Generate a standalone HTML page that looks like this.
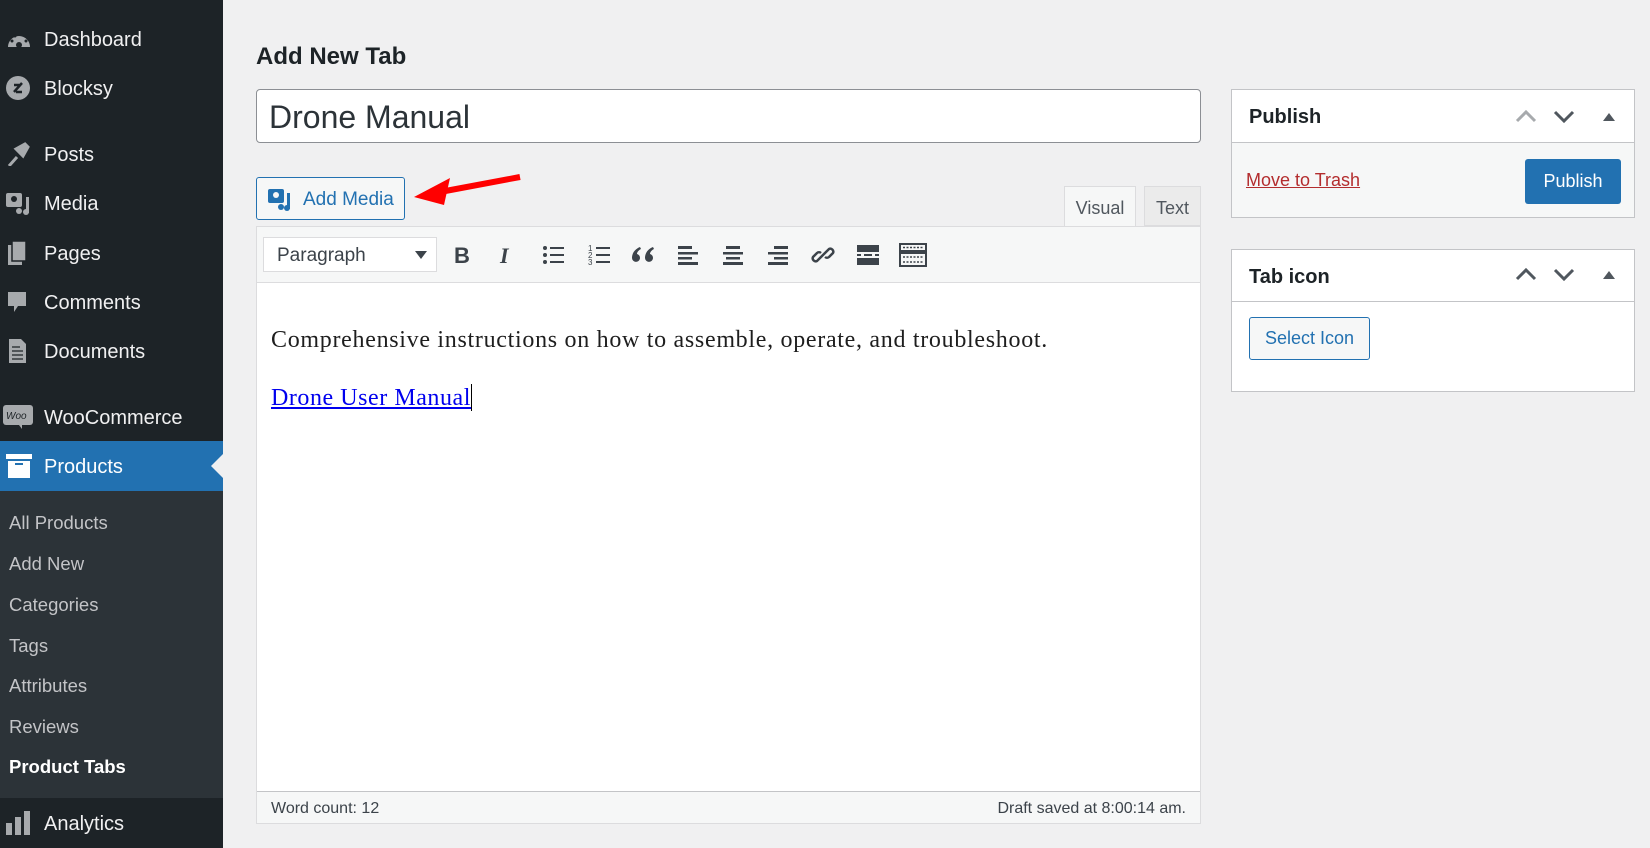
<!DOCTYPE html>
<html><head><meta charset="utf-8"><style>
*{box-sizing:border-box;margin:0;padding:0}
body{width:1650px;height:848px;background:#f0f0f1;font-family:"Liberation Sans",sans-serif;position:relative;overflow:hidden;color:#1d2327}
.abs{position:absolute}
#side{left:0;top:0;width:223px;height:848px;background:#1d2327}
.mi{position:absolute;left:44px;color:#f0f0f1;font-size:20px;line-height:24px;margin-top:1px}
.ic{position:absolute;left:6px;width:26px;height:24px}
.sub{position:absolute;left:9px;color:#c3c4c7;font-size:18.5px;line-height:22px;margin-top:1px}
.box{position:absolute;background:#fff;border:1px solid #c3c4c7}
.tb{position:absolute;top:243px}
</style></head><body>
<div id="side" class="abs">
 <div class="abs" style="left:0;top:491px;width:223px;height:307px;background:#2c3338"></div>
 <div class="abs" style="left:0;top:441px;width:223px;height:50px;background:#2271b1"></div>
 <div class="abs" style="left:211px;top:454px;width:0;height:0;border-top:12px solid transparent;border-bottom:12px solid transparent;border-right:12px solid #f0f0f1"></div>
 <svg class="ic" style="top:27px" viewBox="0 0 26 24"><path d="M2 20a11 11 0 0 1 22 0z" fill="#a7aaad"/><circle cx="13" cy="18" r="3" fill="#1d2327"/><circle cx="6" cy="14" r="1.5" fill="#1d2327"/><circle cx="9" cy="9" r="1.5" fill="#1d2327"/><circle cx="20" cy="14" r="1.5" fill="#1d2327"/></svg>
 <div class="mi" style="top:27px">Dashboard</div>
 <svg class="ic" style="top:76px" viewBox="0 0 26 24"><circle cx="12" cy="12" r="12" fill="#a7aaad"/><path d="M8 16l8-9M8 9h6M10 16h6" stroke="#1d2327" stroke-width="2.5"/></svg>
 <div class="mi" style="top:76px">Blocksy</div>
 <svg class="ic" style="top:142px" viewBox="0 0 26 24"><path d="M3 24l8-9 M10 7l7 7 5-9-3-3z" stroke="#a7aaad" stroke-width="3" fill="#a7aaad"/></svg>
 <div class="mi" style="top:142px">Posts</div>
 <svg class="ic" style="top:191px" viewBox="0 0 26 24"><rect x="0" y="2" width="16" height="14" rx="2" fill="#a7aaad"/><circle cx="8" cy="8" r="3" fill="#1d2327"/><circle cx="13" cy="20" r="3" fill="#a7aaad"/><rect x="20" y="6" width="3" height="16" fill="#a7aaad"/><circle cx="20" cy="21" r="3" fill="#a7aaad"/></svg>
 <div class="mi" style="top:191px">Media</div>
 <svg class="ic" style="top:241px" viewBox="0 0 26 24"><rect x="2" y="4" width="14" height="20" fill="#a7aaad"/><rect x="6" y="0" width="14" height="20" fill="#a7aaad" stroke="#1d2327" stroke-width="1.5"/></svg>
 <div class="mi" style="top:241px">Pages</div>
 <svg class="ic" style="top:290px" viewBox="0 0 26 24"><path d="M2 2h18v14h-8l-4 6v-6H2z" fill="#a7aaad"/></svg>
 <div class="mi" style="top:290px">Comments</div>
 <svg class="ic" style="top:339px" viewBox="0 0 26 24"><path d="M3 0h12l5 5v19H3z" fill="#a7aaad"/><path d="M6 8h8M6 12h11M6 16h11M6 20h11" stroke="#1d2327" stroke-width="1.2"/></svg>
 <div class="mi" style="top:339px">Documents</div>
 <svg class="ic" style="top:405px;left:3px;width:30px" viewBox="0 0 30 24"><rect x="0" y="0" width="30" height="20" rx="3" fill="#a7aaad"/><path d="M16 20l3 4v-4z" fill="#a7aaad"/><text x="3" y="14" font-size="10" font-family="Liberation Sans" fill="#1d2327" font-style="italic">Woo</text></svg>
 <div class="mi" style="top:405px">WooCommerce</div>
 <svg class="ic" style="top:454px" viewBox="0 0 26 24"><rect x="0" y="0" width="26" height="5" fill="#fff"/><rect x="2" y="7" width="22" height="17" fill="#fff"/><rect x="9" y="9" width="8" height="2" fill="#2271b1"/></svg>
 <div class="mi" style="top:454px;color:#fff">Products</div>
 <div class="sub" style="top:511px">All Products</div>
 <div class="sub" style="top:552px">Add New</div>
 <div class="sub" style="top:593px">Categories</div>
 <div class="sub" style="top:634px">Tags</div>
 <div class="sub" style="top:674px">Attributes</div>
 <div class="sub" style="top:715px">Reviews</div>
 <div class="sub" style="top:755px;color:#fff;font-weight:bold">Product Tabs</div>
 <svg class="ic" style="top:811px" viewBox="0 0 26 24"><rect x="0" y="12" width="6" height="12" fill="#a7aaad"/><rect x="9" y="6" width="6" height="18" fill="#a7aaad"/><rect x="18" y="0" width="6" height="24" fill="#a7aaad"/></svg>
 <div class="mi" style="top:811px">Analytics</div>
</div>

<div class="abs" style="left:256px;top:43px;font-size:24px;font-weight:bold;color:#1d2327">Add New Tab</div>
<div class="abs" style="left:256px;top:89px;width:945px;height:54px;background:#fff;border:1px solid #8c8f94;border-radius:4px;font-size:32px;padding:9px 12px 0;color:#2c3338">Drone Manual</div>

<div class="abs" style="left:256px;top:177px;width:149px;height:43px;background:#f6f7f7;border:1px solid #2271b1;border-radius:3px;color:#2271b1;font-size:19px;padding:11px 0 0 46px">Add Media</div>
<svg class="abs" style="left:268px;top:187px" width="26" height="24" viewBox="0 0 26 24"><rect x="0" y="2" width="16" height="14" rx="2" fill="#2271b1"/><circle cx="8" cy="8" r="3" fill="#f6f7f7"/><circle cx="13" cy="20" r="3" fill="#2271b1"/><rect x="19" y="6" width="3" height="16" fill="#2271b1"/><circle cx="19" cy="21" r="3" fill="#2271b1"/></svg>
<svg class="abs" style="left:410px;top:170px" width="115" height="40" viewBox="0 0 115 40"><path d="M110 7L30 22" stroke="#f00" stroke-width="6"/><path d="M4 27L40 8 34 35z" fill="#f00"/></svg>

<div class="abs" style="left:1064px;top:186px;width:72px;height:41px;background:#f6f7f7;border:1px solid #dcdcde;border-bottom:none;font-size:18px;color:#50575e;text-align:center;padding-top:11px">Visual</div>
<div class="abs" style="left:1144px;top:186px;width:57px;height:40px;background:#ebebeb;border:1px solid #dcdcde;font-size:18px;color:#50575e;text-align:center;padding-top:11px">Text</div>

<div class="box" style="left:256px;top:226px;width:945px;height:598px;border-color:#dcdcde"></div>
<div class="abs" style="left:257px;top:227px;width:943px;height:56px;background:#f6f7f7;border-bottom:1px solid #dcdcde"></div>
<div class="abs" style="left:263px;top:237px;width:174px;height:35px;background:#fff;border:1px solid #dcdcde;font-size:19px;color:#3c434a;padding:7px 0 0 13px">Paragraph</div>
<div class="abs" style="left:415px;top:251px;border-left:6px solid transparent;border-right:6px solid transparent;border-top:8px solid #3c434a"></div>
<div class="tb" style="left:454px;font:bold 22px 'Liberation Sans';color:#3c434a">B</div>
<div class="tb" style="left:500px;font:italic bold 22px 'Liberation Serif';color:#3c434a">I</div>
<svg class="abs" style="left:542px;top:243px" width="24" height="24" viewBox="0 0 24 24" fill="#3c434a"><circle cx="3" cy="5" r="2"/><circle cx="3" cy="12" r="2"/><circle cx="3" cy="19" r="2"/><rect x="8" y="4" width="14" height="2"/><rect x="8" y="11" width="14" height="2"/><rect x="8" y="18" width="14" height="2"/></svg>
<svg class="abs" style="left:588px;top:243px" width="24" height="24" viewBox="0 0 24 24" fill="#3c434a"><text x="0" y="8" font-size="8">1</text><text x="0" y="15" font-size="8">2</text><text x="0" y="22" font-size="8">3</text><rect x="8" y="4" width="14" height="2"/><rect x="8" y="11" width="14" height="2"/><rect x="8" y="18" width="14" height="2"/></svg>
<svg class="abs" style="left:631px;top:245px" width="24" height="20" viewBox="0 0 24 20" fill="#3c434a"><path d="M9 2C4 4 1 8 1 13a4 4 0 1 0 5-4c0-2 2-4 4-5zM22 2c-5 2-8 6-8 11a4 4 0 1 0 5-4c0-2 2-4 4-5z"/></svg>
<svg class="abs" style="left:676px;top:243px" width="24" height="24" viewBox="0 0 24 24" fill="#3c434a"><rect x="2" y="3" width="14" height="3"/><rect x="2" y="9" width="20" height="2.5"/><rect x="2" y="14" width="14" height="2.5"/><rect x="2" y="19" width="20" height="3"/></svg>
<svg class="abs" style="left:721px;top:243px" width="24" height="24" viewBox="0 0 24 24" fill="#3c434a"><rect x="5" y="3" width="14" height="3"/><rect x="2" y="9" width="20" height="2.5"/><rect x="5" y="14" width="14" height="2.5"/><rect x="2" y="19" width="20" height="3"/></svg>
<svg class="abs" style="left:766px;top:243px" width="24" height="24" viewBox="0 0 24 24" fill="#3c434a"><rect x="8" y="3" width="14" height="3"/><rect x="2" y="9" width="20" height="2.5"/><rect x="8" y="14" width="14" height="2.5"/><rect x="2" y="19" width="20" height="3"/></svg>
<svg class="abs" style="left:811px;top:243px" width="24" height="24" viewBox="0 0 24 24" fill="none" stroke="#3c434a" stroke-width="2.5"><path d="M10 14l-4 4a3 3 0 0 1-4-4l4-4a3 3 0 0 1 4 0M14 10l4-4a3 3 0 0 1 4 4l-4 4a3 3 0 0 1-4 0M9 15l6-6"/></svg>
<svg class="abs" style="left:856px;top:243px" width="24" height="24" viewBox="0 0 24 24" fill="#3c434a"><rect x="1" y="2" width="22" height="7"/><rect x="1" y="11" width="4" height="2"/><rect x="8" y="11" width="8" height="2"/><rect x="19" y="11" width="4" height="2"/><rect x="1" y="15" width="22" height="7"/></svg>
<svg class="abs" style="left:899px;top:243px" width="28" height="24" viewBox="0 0 28 24" fill="none" stroke="#3c434a" stroke-width="2"><rect x="1" y="1" width="26" height="7"/><rect x="1" y="10" width="26" height="13"/><path d="M4 4.5h20M4 14h20M4 19h20" stroke-dasharray="2 1.5" stroke-width="1.5"/></svg>

<div class="abs" style="left:271px;top:327px;font:24px 'Liberation Serif','DejaVu Serif',serif;color:#1e1e1e;letter-spacing:0.7px">Comprehensive instructions on how to assemble, operate, and troubleshoot.</div>
<div class="abs" style="left:271px;top:384px;font:24px 'Liberation Serif',serif;color:#00e;letter-spacing:0.55px"><span style="text-decoration:underline">Drone User Manual</span><span style="display:inline-block;width:1px;height:27px;background:#000;vertical-align:-6px"></span></div>

<div class="abs" style="left:257px;top:791px;width:943px;height:32px;background:#f6f7f7;border-top:1px solid #c3c4c7;font-size:16px;color:#3c434a;padding:8px 14px 0">Word count: 12<span style="float:right">Draft saved at 8:00:14 am.</span></div>

<div class="box" style="left:1231px;top:89px;width:404px;height:129px"></div>
<div class="abs" style="left:1232px;top:142px;width:402px;height:75px;background:#f6f7f7;border-top:1px solid #c3c4c7"></div>
<div class="abs" style="left:1249px;top:106px;font-size:20px;font-weight:bold;color:#1d2327">Publish</div>
<div class="abs" style="left:1246px;top:170px;font-size:18px;color:#b32d2e;text-decoration:underline">Move to Trash</div>
<div class="abs" style="left:1525px;top:159px;width:96px;height:45px;background:#2271b1;border-radius:3px;color:#fff;font-size:18px;text-align:center;padding-top:12px">Publish</div>

<div class="box" style="left:1231px;top:249px;width:404px;height:143px"></div>
<div class="abs" style="left:1232px;top:301px;width:402px;height:1px;background:#c3c4c7"></div>
<div class="abs" style="left:1249px;top:265px;font-size:20px;font-weight:bold;color:#1d2327;line-height:24px">Tab icon</div>
<div class="abs" style="left:1249px;top:317px;width:121px;height:43px;background:#f6f7f7;border:1px solid #2271b1;border-radius:3px;color:#2271b1;font-size:18px;text-align:center;padding-top:10px">Select Icon</div>

<svg class="abs" style="left:1515px;top:107px" width="120" height="20" viewBox="0 0 120 20" fill="none" stroke-width="3"><path d="M2 14l9-9 9 9" stroke="#a7aaad"/><path d="M40 5l9 9 9-9" stroke="#50575e"/><path d="M88 14l6-8 6 8z" fill="#50575e" stroke="none"/></svg>
<svg class="abs" style="left:1515px;top:265px" width="120" height="20" viewBox="0 0 120 20" fill="none" stroke-width="3"><path d="M2 14l9-9 9 9" stroke="#50575e"/><path d="M40 5l9 9 9-9" stroke="#50575e"/><path d="M88 14l6-8 6 8z" fill="#50575e" stroke="none"/></svg>
</body></html>
